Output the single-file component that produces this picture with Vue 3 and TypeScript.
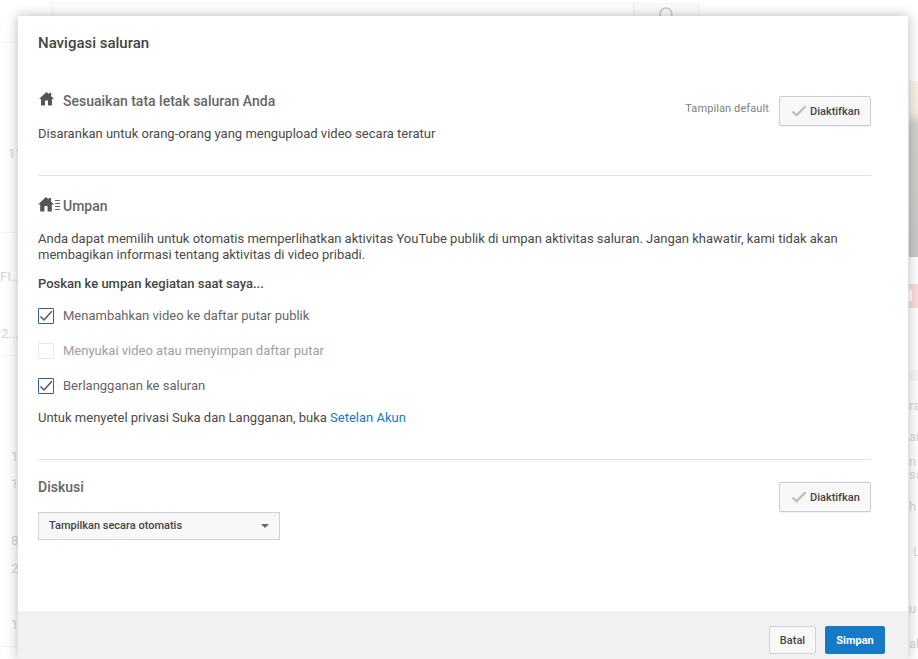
<script setup lang="ts">
interface Frag { text: string; x: number; y: number }
const frags: Frag[] = [
  { text: '11', x: 8, y: 146 },
  { text: 'FI...', x: 0, y: 269 },
  { text: '2...', x: 1, y: 326 },
  { text: '1', x: 11, y: 449 },
  { text: '1', x: 11, y: 476 },
  { text: '8', x: 11, y: 533 },
  { text: '2', x: 11, y: 561 },
  { text: '1', x: 11, y: 617 },
  { text: 'ra', x: 909, y: 398 },
  { text: 'ar', x: 909, y: 429 },
  { text: 'n', x: 909, y: 454 },
  { text: 'sa', x: 909, y: 467 },
  { text: 'h', x: 909, y: 499 },
  { text: 'L', x: 913, y: 544 },
  { text: 'u', x: 909, y: 601 },
  { text: 'alu', x: 909, y: 636 }
]
const options = [
  { label: 'Menambahkan video ke daftar putar publik', checked: true, disabled: false },
  { label: 'Menyukai video atau menyimpan daftar putar', checked: false, disabled: true },
  { label: 'Berlangganan ke saluran', checked: true, disabled: false }
]
</script>

<template>
  <div class="page">
    <div class="backdrop">
      <div class="search"><div class="search-btn"><svg width="20" height="20" viewBox="0 0 20 20"><circle cx="9" cy="9" r="6" fill="none" stroke="#ccc" stroke-width="1.5"/></svg></div></div>
      <div class="rule r1"></div><div class="rule r2"></div><div class="rule r3"></div><div class="rule r4"></div>
      <div class="hero"></div>
      <div class="red"><i class="notch"></i></div>
      <div class="band"></div>
      <span v-for="f in frags" :key="f.text + f.y" class="frag" :style="{ left: f.x + 'px', top: f.y + 'px' }">{{ f.text }}</span>
    </div>

    <div class="modal">
      <div class="body">
        <h1 class="title">Navigasi saluran</h1>

        <section class="layout">
          <div class="layout-main">
            <h2 class="heading gap-icon">
              <svg class="home" width="15" height="15" viewBox="0 0 16 16"><path fill="#555" d="M8 1 L10.6 3.4 V2 H13 V5.6 L16 8.4 H13.8 V15.5 H9.6 V10 H6.4 V15.5 H2.2 V8.4 H0 Z"/></svg>
              <span>Sesuaikan tata letak saluran Anda</span>
            </h2>
            <p class="text desc">Disarankan untuk orang-orang yang mengupload video secara teratur</p>
          </div>
          <div class="layout-side">
            <span class="default">Tampilan default</span>
            <button class="enabled">
              <svg width="16" height="12" viewBox="0 0 16 12"><path fill="none" stroke="#bbb" stroke-width="2.2" d="M1.5 6.5 L5.5 10.2 L14.5 1.2"/></svg>
              Diaktifkan
            </button>
          </div>
        </section>

        <section class="feed">
          <h2 class="heading feed-heading">
            <svg width="25" height="16" viewBox="0 0 25 16">
              <path fill="#555" d="M8 1 L10.6 3.4 V2 H13 V5.6 L16 8.4 H13.8 V15.5 H9.6 V10 H6.4 V15.5 H2.2 V8.4 H0 Z"/>
              <path stroke="#666" stroke-width="1" d="M17 4.5 H22 M17 7.5 H22 M17 10.5 H22 M17 13.5 H22" />
            </svg>
            <span>Umpan</span>
          </h2>
          <p class="text intro">Anda dapat memilih untuk otomatis memperlihatkan aktivitas YouTube publik di umpan aktivitas saluran. Jangan khawatir, kami tidak akan membagikan informasi tentang aktivitas di video pribadi.</p>
          <p class="post-label">Poskan ke umpan kegiatan saat saya...</p>
          <ul class="options">
            <li v-for="o in options" :key="o.label" class="option" :class="{ off: o.disabled }">
              <span class="box">
                <svg v-if="o.checked" width="14" height="12" viewBox="0 0 14 12"><path fill="none" stroke="#555" stroke-width="1.5" d="M1.5 6.5 L5 10 L12.8 1.2"/></svg>
              </span>
              {{ o.label }}
            </li>
          </ul>
          <p class="text privacy">Untuk menyetel privasi Suka dan Langganan, buka <a class="link">Setelan Akun</a></p>
        </section>

        <section class="discuss">
          <div>
            <h2 class="heading">Diskusi</h2>
            <div class="select">
              <span>Tampilkan secara otomatis</span>
              <i class="caret"></i>
            </div>
          </div>
          <button class="enabled">
            <svg width="16" height="12" viewBox="0 0 16 12"><path fill="none" stroke="#bbb" stroke-width="2.2" d="M1.5 6.5 L5.5 10.2 L14.5 1.2"/></svg>
            Diaktifkan
          </button>
        </section>
      </div>

      <footer class="footer">
        <button class="btn cancel">Batal</button>
        <button class="btn save">Simpan</button>
      </footer>
    </div>
  </div>
</template>

<style>
html, body { margin: 0; overflow: hidden; background: #fff; }
</style>

<style scoped>
.page { position: relative; width: 918px; height: 659px; overflow: hidden; font-family: Roboto, "Liberation Sans", sans-serif; color: #333; }
.backdrop { position: absolute; inset: 0; background: #fff; }
.search { position: absolute; left: 52px; top: 3px; width: 648px; height: 40px; border: 1px solid #f3f3f3; border-radius: 2px; box-sizing: border-box; }
.search-btn { position: absolute; right: 0; top: 0; width: 66px; height: 38px; border-left: 1px solid #f0f0f0; background: #fcfcfc; display: flex; justify-content: center; padding-top: 1px; box-sizing: border-box; }
.rule { position: absolute; height: 1px; background: #f5f5f5; }
.r1 { left: 0; top: 42px; width: 18px; }
.r2 { left: 0; top: 232px; width: 18px; }
.r3 { left: 0; top: 355px; width: 18px; }
.r4 { left: 0; top: 646px; width: 18px; }
.hero { position: absolute; left: 909px; top: 81px; width: 9px; height: 176px; background: linear-gradient(#faf3e8 0, #f6efe4 30px, #cfcfcc 45px, #c8c8c6 100%); }
.red { position: absolute; left: 909px; top: 284px; width: 9px; height: 24px; background: #fbdcdc; }
.notch { position: absolute; left: 0; top: 6px; width: 3px; height: 11px; background: #fff; }
.band { position: absolute; left: 909px; top: 370px; width: 9px; height: 11px; background: #f7f7f7; }
.frag { position: absolute; font-size: 13px; line-height: 16px; color: #d6d6d6; }
.modal { position: absolute; left: 18px; top: 16px; width: 890px; height: 643px; background: #fff; display: flex; flex-direction: column; box-shadow: 0 0 12px rgba(0, 0, 0, .28); }
.body { flex: 1; padding: 0 37px 0 20px; min-height: 0; }
.title { margin: 0; padding-top: 18px; font-size: 15px; line-height: 18px; font-weight: 500; color: #444; }
.layout { display: flex; justify-content: space-between; margin-top: 24px; height: 99px; border-bottom: 1px solid #e2e2e2; box-sizing: content-box; }
.heading { margin: 0; font-size: 14px; line-height: 18px; font-weight: 500; color: #666; display: flex; align-items: center; }
.gap-icon { gap: 9px; padding-top: 16px; }
.home { margin-top: -5px; margin-left: 1px; }
.text { margin: 0; font-size: 13px; line-height: 16px; color: #4a4a4a; }
.desc { margin-top: 16px; }
.layout-side { display: flex; align-items: flex-start; padding-top: 20px; gap: 10px; }
.default { font-size: 11px; line-height: 14px; color: #808080; margin-top: 6px; letter-spacing: .1px; }
.enabled { box-sizing: border-box; width: 92px; height: 30px; display: flex; align-items: center; gap: 3px; padding: 0 0 0 11px; border: 1px solid #ccc; border-radius: 2px; background: #f8f8f8; font: 500 11px Roboto, sans-serif; color: #444; box-shadow: 0 1px 0 rgba(0,0,0,.05); }
.feed { border-bottom: 1px solid #e2e2e2; height: 283px; }
.feed-heading { padding-top: 21px; }
.feed-heading svg { margin-top: -5px; }
.intro { margin-top: 16px; }
.post-label { margin: 13px 0 0; font-size: 13px; line-height: 16px; font-weight: 500; color: #444; }
.options { list-style: none; margin: 6px 0 0; padding: 0; }
.option { height: 35px; display: flex; align-items: center; gap: 9px; font-size: 13px; color: #666; }
.option.off { color: #a0a0a0; }
.box { box-sizing: border-box; width: 16px; height: 16px; border: 1px solid #2f6199; border-radius: 1px; display: flex; align-items: center; justify-content: center; background: #fff; }
.off .box { border-color: #e8e8e8; }
.privacy { margin-top: 7px; }
.link { color: #167ac6; }
.discuss { display: flex; justify-content: space-between; padding-top: 19px; }
.discuss .heading { padding-top: 0; line-height: 16px; }
.discuss .enabled { margin-top: 3px; }
.select { box-sizing: border-box; width: 242px; height: 28px; margin-top: 17px; padding: 0 10px 1px; display: flex; align-items: center; justify-content: space-between; border: 1px solid #d3d3d3; background: #f8f8f8; font-size: 11px; font-weight: 500; color: #444; }
.caret { width: 0; height: 0; border: 4px solid transparent; border-top: 4px solid #666; border-bottom: 0; }
.footer { height: 48px; flex: none; background: #f1f1f1; display: flex; justify-content: flex-end; align-items: flex-start; gap: 9px; padding: 15px 23px 0 0; box-sizing: border-box; }
.btn { box-sizing: border-box; height: 28px; border-radius: 2px; font: 500 11px Roboto, sans-serif; padding: 0; }
.cancel { width: 47px; background: #f8f8f8; border: 1px solid #d3d3d3; color: #444; }
.save { width: 60px; background: #167ac6; border: 1px solid #167ac6; color: #fff; font-weight: 700; }
</style>
